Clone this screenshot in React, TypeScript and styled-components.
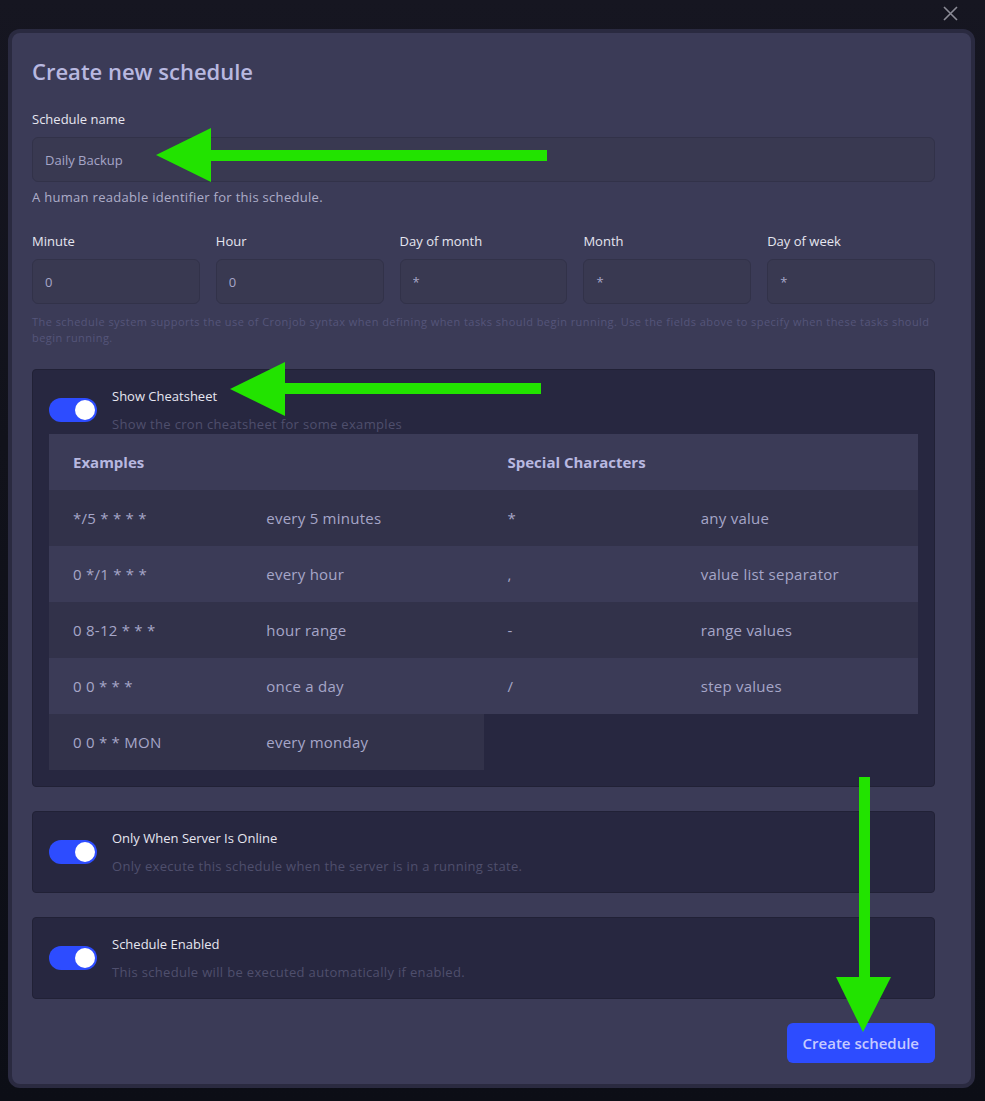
import React from 'react';
import styled, { createGlobalStyle } from 'styled-components';

const colors = {
  page: '#12131c',
  modal: '#3b3b57',
  modalEdge: '#2a2a40',
  input: '#393951',
  inputBorder: '#323249',
  panel: '#272740',
  panelBorder: '#212136',
  rowDark: '#32324a',
  rowLight: '#3b3b57',
  blue: '#2d4cff',
  green: '#22e300',
  text: {
    title: '#b8b8e0',
    label: '#e6e6f0',
    value: '#a6a6c8',
    help: '#adadc9',
    dim: '#55557a',
    muted: '#4f4f6d',
  },
};

const examples = [
  { expr: '*/5 * * * *', desc: 'every 5 minutes' },
  { expr: '0 */1 * * *', desc: 'every hour' },
  { expr: '0 8-12 * * *', desc: 'hour range' },
  { expr: '0 0 * * *', desc: 'once a day' },
  { expr: '0 0 * * MON', desc: 'every monday' },
];

const specials = [
  { expr: '*', desc: 'any value' },
  { expr: ',', desc: 'value list separator' },
  { expr: '-', desc: 'range values' },
  { expr: '/', desc: 'step values' },
];

const cronFields = [
  { label: 'Minute', value: '0' },
  { label: 'Hour', value: '0' },
  { label: 'Day of month', value: '*' },
  { label: 'Month', value: '*' },
  { label: 'Day of week', value: '*' },
];

const CheatTable = ({ title, rows }: { title: string; rows: { expr: string; desc: string }[] }) => (
  <Table>
    <thead>
      <tr>
        <Th colSpan={2}>{title}</Th>
      </tr>
    </thead>
    <tbody>
      {rows.map((r, i) => (
        <Row key={r.expr} odd={i % 2 === 0}>
          <Td>{r.expr}</Td>
          <Td second>{r.desc}</Td>
        </Row>
      ))}
    </tbody>
  </Table>
);

const SwitchRow = ({
  title,
  description,
  children,
}: {
  title: string;
  description: string;
  children?: React.ReactNode;
}) => (
  <Panel>
    <SwitchLine>
      <Toggle>
        <Knob />
      </Toggle>
      <SwitchText>
        <SwitchTitle>{title}</SwitchTitle>
        <SwitchDesc>{description}</SwitchDesc>
      </SwitchText>
    </SwitchLine>
    {children}
  </Panel>
);

// green annotation arrows drawn over the dialog
const Arrows = () => (
  <Overlay width="985" height="1101" viewBox="0 0 985 1101">
    <g fill={colors.green}>
      <rect x="205" y="150" width="342" height="11" />
      <polygon points="156,155 211,128 211,182" />
      <rect x="280" y="383" width="261" height="11" />
      <polygon points="230,389 285,362 285,416" />
      <rect x="859" y="777" width="11" height="204" />
      <polygon points="836,977 891,977 863,1032" />
    </g>
  </Overlay>
);

export default function App() {
  return (
    <>
      <GlobalStyle />
      <Page>
        <TopBar>
          <Close aria-label="close">
            <svg width="15" height="15" viewBox="0 0 15 15">
              <path d="M1 1 L14 14 M14 1 L1 14" stroke="#8b8b96" strokeWidth="1.6" />
            </svg>
          </Close>
        </TopBar>
        <Modal>
          <Title>Create new schedule</Title>

          <Label>Schedule name</Label>
          <Input defaultValue="Daily Backup" />
          <Help>A human readable identifier for this schedule.</Help>

          <CronGrid>
            {cronFields.map((f) => (
              <div key={f.label}>
                <Label>{f.label}</Label>
                <Input defaultValue={f.value} />
              </div>
            ))}
          </CronGrid>
          <CronNote>
            The schedule system supports the use of Cronjob syntax when defining when tasks should
            begin running. Use the fields above to specify when these tasks should begin running.
          </CronNote>

          <Panels>
            <SwitchRow title="Show Cheatsheet" description="Show the cron cheatsheet for some examples">
              <Tables>
                <CheatTable title="Examples" rows={examples} />
                <CheatTable title="Special Characters" rows={specials} />
              </Tables>
            </SwitchRow>
            <SwitchRow
              title="Only When Server Is Online"
              description="Only execute this schedule when the server is in a running state."
            />
            <SwitchRow
              title="Schedule Enabled"
              description="This schedule will be executed automatically if enabled."
            />
          </Panels>

          <Footer>
            <Button>Create schedule</Button>
          </Footer>
        </Modal>
        <Arrows />
      </Page>
    </>
  );
}

const GlobalStyle = createGlobalStyle`
  html, body {
    margin: 0;
    padding: 0;
    background: ${colors.page};
  }
  body {
    font-family: "Open Sans", "Noto Sans", sans-serif;
  }
  * { box-sizing: border-box; }
`;

const Page = styled.div`
  position: relative;
  width: 985px;
  min-height: 1101px;
  padding: 0 10px 0 8px;
  background: linear-gradient(180deg, #161621 0%, #11121b 40%, #0c0e16 100%);
`;

const TopBar = styled.div`
  height: 29px;
  display: flex;
  justify-content: flex-end;
  align-items: flex-start;
  padding: 6px 17px 0 0;
`;

const Close = styled.button`
  width: 15px;
  height: 15px;
  padding: 0;
  border: 0;
  background: none;
  display: flex;
`;

const Modal = styled.div`
  border: 4px solid ${colors.modalEdge};
  border-radius: 12px;
  background: ${colors.modal};
  padding: 20px 36px 21px 20px;
`;

const Title = styled.h2`
  margin: 0 0 20px;
  font-size: 22px;
  line-height: 36px;
  font-weight: 600;
  color: ${colors.text.title};
`;

const Label = styled.div`
  font-size: 13px;
  line-height: 20px;
  color: ${colors.text.label};
  margin-bottom: 8px;
`;

const Input = styled.input`
  display: block;
  width: 100%;
  height: 45px;
  padding: 0 12px;
  border: 1px solid ${colors.inputBorder};
  border-radius: 6px;
  background: ${colors.input};
  color: ${colors.text.value};
  font-family: inherit;
  font-size: 13px;
  outline: none;
`;

const Help = styled.div`
  margin-top: 5px;
  font-size: 13px;
  line-height: 20px;
  letter-spacing: 0.3px;
  color: ${colors.text.help};
`;

const CronGrid = styled.div`
  margin-top: 24px;
  display: grid;
  grid-template-columns: repeat(5, 1fr);
  column-gap: 16px;
`;

const CronNote = styled.p`
  margin: 10px 0 0;
  font-size: 11px;
  line-height: 16px;
  letter-spacing: 0.45px;
  color: ${colors.text.dim};
`;

const Panels = styled.div`
  margin-top: 23px;
  display: flex;
  flex-direction: column;
  gap: 24px;
`;

const Panel = styled.div`
  border: 1px solid ${colors.panelBorder};
  border-radius: 4px;
  background: ${colors.panel};
  padding: 16px;
`;

const SwitchLine = styled.div`
  display: flex;
  align-items: center;
  gap: 15px;
`;

const Toggle = styled.div`
  flex: none;
  width: 48px;
  height: 24px;
  border-radius: 12px;
  background: ${colors.blue};
  display: flex;
  align-items: center;
  justify-content: flex-end;
  padding: 2px;
`;

const Knob = styled.div`
  width: 20px;
  height: 20px;
  border-radius: 50%;
  background: #ffffff;
`;

const SwitchText = styled.div`
  display: flex;
  flex-direction: column;
  gap: 8px;
`;

const SwitchTitle = styled.div`
  font-size: 13px;
  line-height: 20px;
  color: ${colors.text.label};
`;

const SwitchDesc = styled.div`
  font-size: 13px;
  line-height: 20px;
  letter-spacing: 0.33px;
  color: ${colors.text.muted};
`;

const Tables = styled.div`
  display: flex;
  align-items: flex-start;
`;

const Table = styled.table`
  width: 50%;
  border-collapse: collapse;
  table-layout: fixed;
  font-size: 15px;
`;

const Th = styled.th`
  height: 56px;
  padding: 0 24px;
  text-align: left;
  font-weight: 700;
  color: ${colors.text.title};
  background: ${colors.rowLight};
`;

const Row = styled.tr<{ odd: boolean }>`
  height: 56px;
  background: ${(p) => (p.odd ? colors.rowDark : colors.rowLight)};
`;

const Td = styled.td<{ second?: boolean }>`
  width: 50%;
  padding: 0 0 0 ${(p) => (p.second ? '0' : '24px')};
  letter-spacing: 0.25px;
  color: ${colors.text.value};
  white-space: nowrap;
`;

const Footer = styled.div`
  margin-top: 24px;
  display: flex;
  justify-content: flex-end;
`;

const Button = styled.button`
  height: 40px;
  padding: 0 16px;
  border: 0;
  border-radius: 6px;
  background: ${colors.blue};
  color: #c6caff;
  font-family: inherit;
  font-size: 15px;
  font-weight: 600;
`;

const Overlay = styled.svg`
  position: absolute;
  top: 0;
  left: 0;
  pointer-events: none;
`;
